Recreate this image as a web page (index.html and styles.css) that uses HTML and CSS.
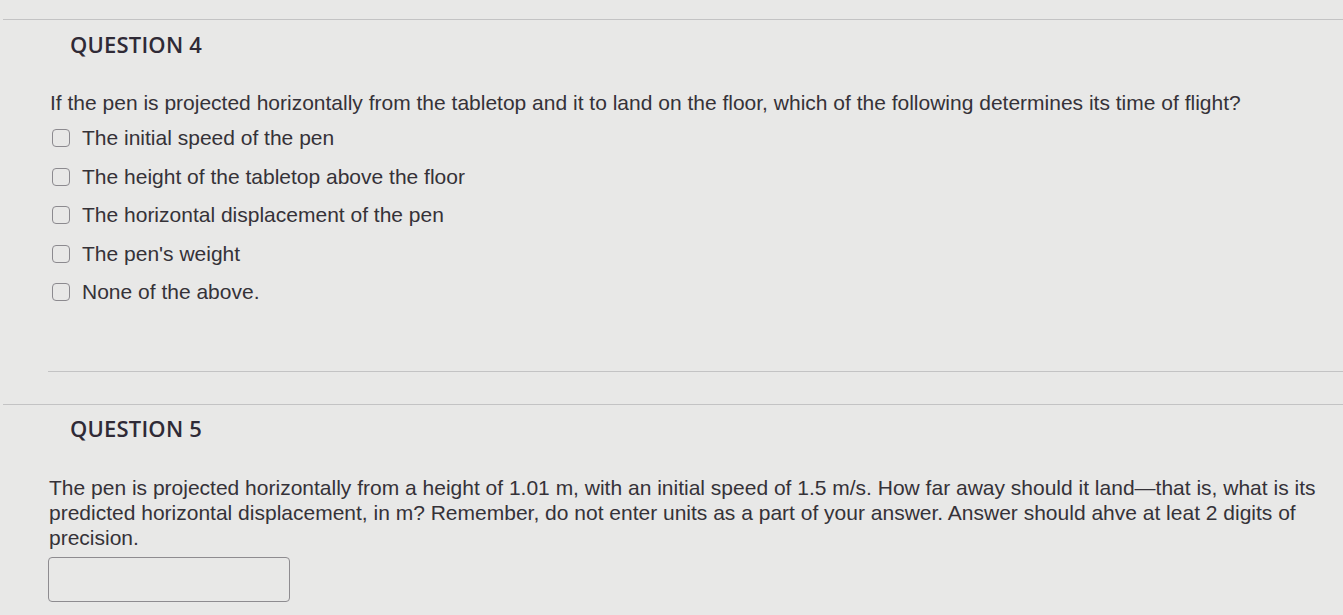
FILE: index.html
```html
<!DOCTYPE html>
<html lang="en">
<head>
<meta charset="utf-8">
<title>Questions</title>
<link rel="stylesheet" href="styles.css">
</head>
<body>
<div class="page">
  <section class="question q4">
    <h2 class="q-title">QUESTION 4</h2>
    <p class="prompt">If the pen is projected horizontally from the tabletop and it to land on the floor, which of the following determines its time of flight?</p>
    <ul class="options">
      <li class="option"><span class="box"></span><span class="label">The initial speed of the pen</span></li>
      <li class="option"><span class="box"></span><span class="label">The height of the tabletop above the floor</span></li>
      <li class="option"><span class="box"></span><span class="label">The horizontal displacement of the pen</span></li>
      <li class="option"><span class="box"></span><span class="label">The pen's weight</span></li>
      <li class="option"><span class="box"></span><span class="label">None of the above.</span></li>
    </ul>
    <div class="inner-rule"></div>
  </section>
  <section class="question q5">
    <h2 class="q-title">QUESTION 5</h2>
    <p class="prompt para">The pen is projected horizontally from a height of 1.01 m, with an initial speed of 1.5 m/s. How far away should it land—that is, what is its predicted horizontal displacement, in m? Remember, do not enter units as a part of your answer. Answer should ahve at leat 2 digits of precision.</p>
    <div class="answer"></div>
  </section>
</div>
</body>
</html>
```
FILE: styles.css
```css
html, body {
  margin: 0;
  padding: 0;
  background: #e8e8e7;
}
body {
  font-family: "Liberation Sans", Arial, sans-serif;
  color: #353238;
  overflow: hidden;
}
.page {
  width: 1343px;
  height: 615px;
  overflow: hidden;
}
.question {
  margin-left: 3px;
  border-top: 1.5px solid #c3c3c4;
}
.q4 {
  margin-top: 19px;
}
.q-title {
  font-family: "Open Sans", sans-serif;
  font-weight: 600;
  font-size: 22px;
  line-height: 24px;
  color: #2f2a36;
  margin: 12px 0 0 67px;
  letter-spacing: 0.2px;
}
.prompt {
  font-size: 21px;
  line-height: 24px;
  margin: 35px 0 0 47px;
}
.options {
  list-style: none;
  margin: 4px 0 0 49px;
  padding: 0;
}
.option {
  height: 38.5px;
  display: flex;
  align-items: center;
  font-size: 21px;
}
.box {
  width: 16px;
  height: 16px;
  border: 1.8px solid #8c8a8f;
  border-radius: 4px;
  margin-right: 12px;
  flex: none;
}
.inner-rule {
  margin: 59px 0 0 45px;
  border-top: 1.5px solid #c3c3c4;
}
.q5 {
  margin-top: 32px;
}
.q5 .q-title {
  margin-top: 11px;
}
.para {
  margin: 35px 20px 0 46px;
  line-height: 25px;
}
.answer {
  margin: 7px 0 0 45px;
  width: 240px;
  height: 43px;
  border: 1.3px solid #8e8c90;
  border-radius: 4px;
}
```
